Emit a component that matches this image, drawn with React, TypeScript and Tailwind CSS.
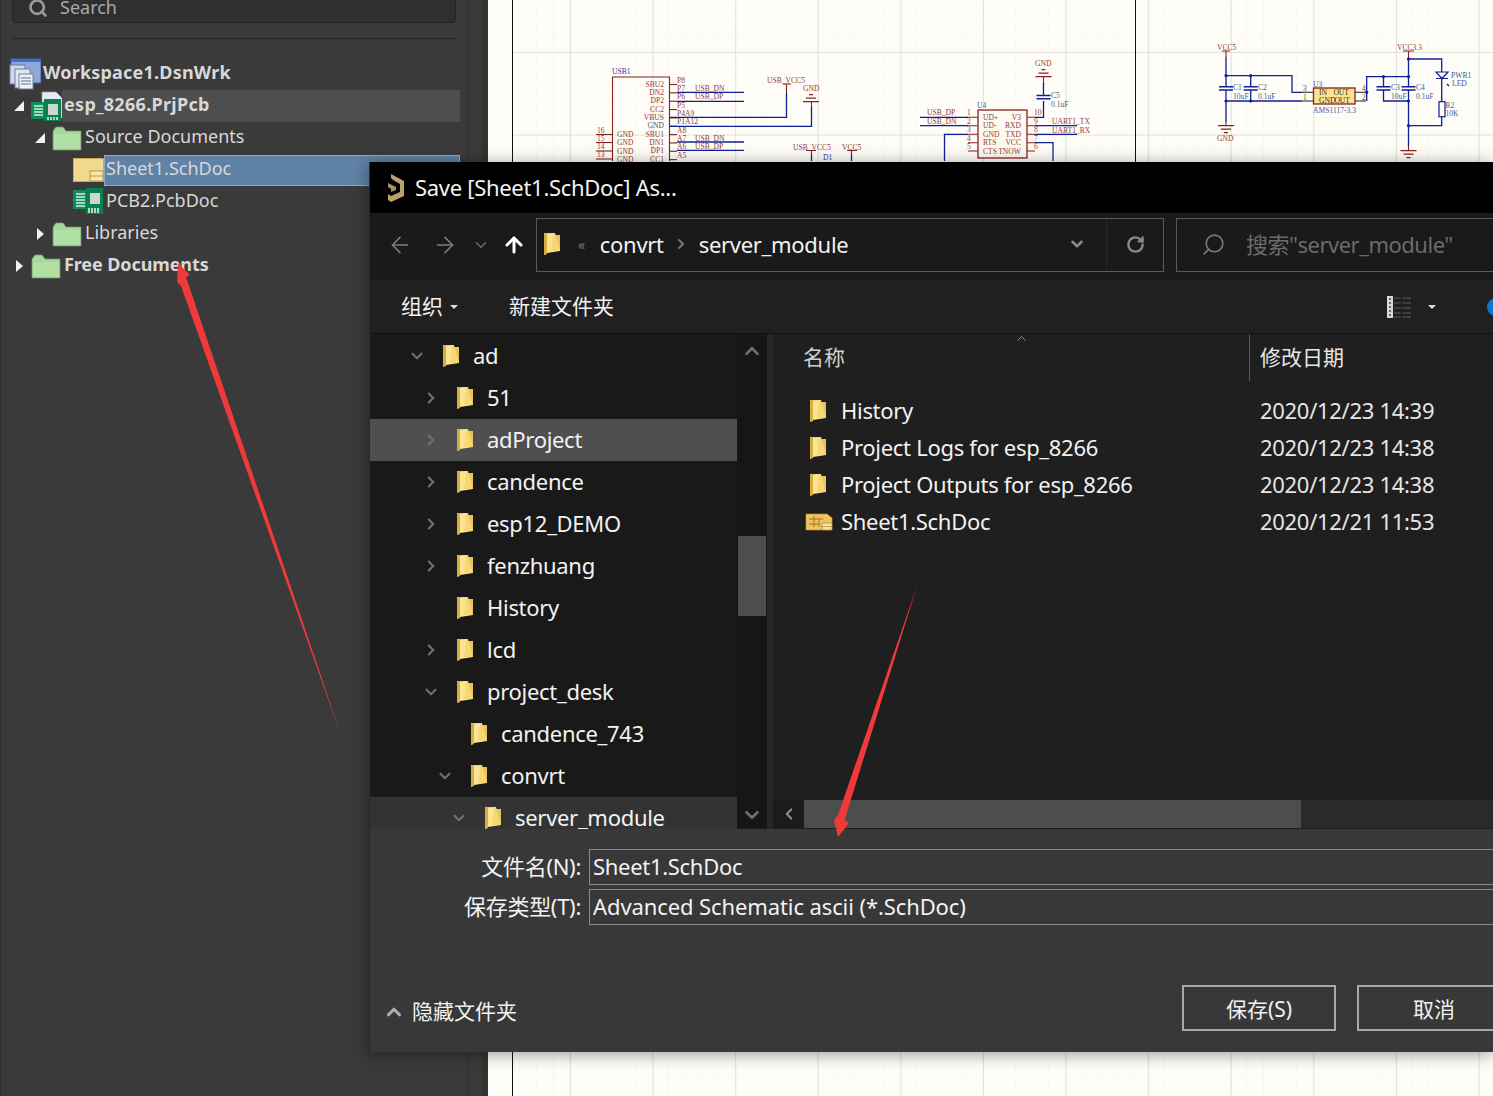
import { ArrowLeft, ArrowRight, ArrowUp, ChevronDown, ChevronLeft, ChevronRight, ChevronUp, RotateCw, Search } from "lucide-react";

const uiFont = "font-['Noto_Sans','Noto_Sans_CJK_SC',sans-serif]";

function FolderIcon() {
  return (
    <svg width="18" height="24" viewBox="0 0 18 24" className="shrink-0">
      <path d="M1 1 L11 1 L12 3 L17 3 L17 19 L4 19 L4 22 L1 23 Z" fill="#e8c35c" />
      <path d="M4 2 L11 1 L13 19 L17 19 L4 21 Z" fill="#fbe595" />
      <path d="M1 2 L4 1 L4 21 L1 23 Z" fill="#d9ad3f" />
      <path d="M10 1 L12 1 L17 19 L8 19 Z" fill="#f7d774" />
    </svg>
  );
}

function GreenFolder() {
  return (
    <svg width="30" height="25" viewBox="0 0 30 25" className="shrink-0">
      <path d="M1 24 L1 5 L4 1 L11 1 L14 5 L29 5 L29 24 Z" fill="#a9d89c" stroke="#6f9968" strokeWidth="0.7" />
      <path d="M2 8 L28 8 L28 23 L2 23 Z" fill="#b2dfa4" />
    </svg>
  );
}

function TreeArrow({ open }: { open?: boolean }) {
  return (
    <svg width="10" height="12" viewBox="0 0 10 12" className="shrink-0">
      {open ? <path d="M0 11 L10 11 L10 1 Z" fill="#f2f2f2" /> : <path d="M1 0 L8 6 L1 12 Z" fill="#f2f2f2" />}
    </svg>
  );
}

function WorkspaceIcon() {
  return (
    <svg width="32" height="32" viewBox="0 0 32 32" className="shrink-0">
      <rect x="2" y="1" width="30" height="24" fill="#8fa9d6" stroke="#3c63b0" />
      <rect x="2" y="1" width="30" height="3" fill="#3f6fd0" />
      <rect x="1" y="7" width="15" height="19" fill="#cfd9ec" stroke="#6f7f9f" />
      <rect x="6" y="11" width="15" height="19" fill="#dfe6f3" stroke="#6f7f9f" />
      <rect x="10" y="16" width="14" height="15" fill="#eef2f9" stroke="#6f7f9f" />
      <path d="M12 20h10M12 23h10M12 26h10" stroke="#5d6f92" />
    </svg>
  );
}

function PcbIcon({ withSheet }: { withSheet?: boolean }) {
  return (
    <svg width="32" height="30" viewBox="0 0 32 30" className="shrink-0">
      {withSheet && <path d="M12 1 L26 1 L32 7 L32 27 L12 27 Z" fill="#e4e9f2" stroke="#9aa6bb" strokeWidth="0.7" />}
      <rect x="1" y={withSheet ? 11 : 3} width="26" height={withSheet ? 17 : 19} fill="#0b8f5c" />
      <rect x="14" y={withSheet ? 8 : 1} width="17" height={withSheet ? 22 : 26} fill="#0a7f4f" />
      <rect x="18" y={withSheet ? 13 : 6} width="10" height="11" fill="#c9d7d0" />
      <path d={withSheet ? "M4 15h9M4 18h9M4 21h9M4 24h9" : "M4 7h9M4 10h9M4 13h9M4 16h9M4 19h9"} stroke="#d6efe2" strokeWidth="1.3" />
      <path d={withSheet ? "M18 26v3M21 26v3M24 26v3M27 26v3" : "M17 21v5M20 21v5M23 21v5M26 21v5"} stroke="#e9f5d8" strokeWidth="1.5" />
    </svg>
  );
}

function SchIcon() {
  return (
    <svg width="31" height="24" viewBox="0 0 31 24" className="shrink-0">
      <rect x="0.5" y="0.5" width="30" height="23" fill="#f0d98a" stroke="#c9ab55" />
      <rect x="17" y="13" width="13" height="10" fill="#f7e7ae" stroke="#b8974a" />
      <path d="M17 18h13" stroke="#b8974a" />
    </svg>
  );
}

function LeftPanel() {
  return (
    <div className={`${uiFont} relative h-full w-[488px] shrink-0 border-l border-[#2c2c2c] bg-[#3a3a3a] text-[18px] text-[#d8d8d8]`}>
      <div className="absolute bottom-0 left-[466px] top-0 w-px bg-[#2f2f2f]" />
      <div className="absolute bottom-0 left-[481px] top-0 w-[6px] bg-[#333333]" />
      <div className="ml-[11px] flex h-[23px] w-[444px] items-center gap-[12px] rounded-b border border-t-0 border-[#242424] bg-[#2f2f2f] pb-[7px] pl-[15px] text-[#a9a9a9]">
        <Search size={20} strokeWidth={3.2} className="text-[#9a9a9a]" />
        <span>Search</span>
      </div>
      <div className="ml-[11px] mt-[15px] h-px w-[445px] bg-[#252525]" />

      <div className="mt-[19px] w-[467px]">
        <div className="flex h-[32px] items-center pl-[8px]">
          <WorkspaceIcon />
          <span className="mb-[4px] ml-[2px] font-bold tracking-[0.2px]">Workspace1.DsnWrk</span>
        </div>
        <div className="flex h-[32px] items-center pl-[13px]">
          <TreeArrow open />
          <div className="ml-[6px]"><PcbIcon withSheet /></div>
          <div className="mr-[8px] flex h-full flex-1 items-center bg-[#4e4e4e] pb-[4px] pl-[2px] font-bold tracking-[0.3px]">esp_8266.PrjPcb</div>
        </div>
        <div className="flex h-[32px] items-center pl-[34px]">
          <TreeArrow open />
          <div className="ml-[7px]"><GreenFolder /></div>
          <span className="mb-[4px] ml-[3px]">Source Documents</span>
        </div>
        <div className="flex h-[32px] items-center pl-[72px]">
          <SchIcon />
          <div className="mr-[8px] flex h-[31px] flex-1 items-center border border-[#8fa9c4] bg-[#5f82a6] pb-[3px] pl-[1px]">Sheet1.SchDoc</div>
        </div>
        <div className="flex h-[32px] items-center pl-[71px]">
          <PcbIcon />
          <div className="ml-[2px] flex h-full flex-1 items-center border-b border-[#343434] pb-[2px]">PCB2.PcbDoc</div>
        </div>
        <div className="flex h-[32px] items-center pl-[35px]">
          <TreeArrow />
          <div className="ml-[6px]"><GreenFolder /></div>
          <div className="ml-[3px] flex h-full flex-1 items-center border-b border-[#343434] pb-[2px]">Libraries</div>
        </div>
        <div className="flex h-[32px] items-center pl-[14px]">
          <TreeArrow />
          <div className="ml-[6px]"><GreenFolder /></div>
          <div className="ml-[3px] flex h-full flex-1 items-center border-b border-[#343434] pb-[2px] font-bold tracking-[-0.1px]">Free Documents</div>
        </div>
      </div>
    </div>
  );
}

const RED = "#8a1f1f";
const BLUE = "#0f1f96";
const TEXT = "#9a3a3a";
const PART = "#4a5a92";

// cy is the vertical centre of the label, as read off the picture
function Label({ x, cy, t, end, color = TEXT }: { x: number; cy: number; t: string; end?: boolean; color?: string }) {
  return (
    <text x={x} y={cy + 2.5} fontSize="7.6" fill={color} textAnchor={end ? "end" : "start"} fontFamily="'Liberation Serif', serif">
      {t}
    </text>
  );
}

// power ground, dir 1 narrows downwards and -1 narrows upwards
function Gnd({ x, y, dir = 1 }: { x: number; y: number; dir?: number }) {
  return (
    <path d={`M${x - 8} ${y}h16M${x - 5} ${y + dir * 3.5}h10M${x - 2} ${y + dir * 7}h4`} stroke={RED} strokeWidth="1.2" fill="none" />
  );
}

function Cap({ x, y }: { x: number; y: number }) {
  return <path d={`M${x - 7} ${y}h14M${x - 7} ${y + 3.3}h14`} stroke={BLUE} strokeWidth="1.4" fill="none" />;
}

function Schematic() {
  const usbLeft = ["SBU2", "DN2", "DP2", "CC2", "VBUS", "GND", "SBU1", "DN1", "DP1", "CC1"];
  const usbPins = ["P8", "P7", "P6", "P5", "P4A9", "P1A12", "A8", "A7", "A6", "A5"];
  const u4Left = ["UD+", "UD-", "GND", "RTS", "CTS"];
  const u4Right = ["V3", "RXD", "TXD", "VCC", "TNOW"];
  const rowsY = [117.3, 125.7, 134.3, 142.7, 151];
  return (
    <svg viewBox="488 0 1005 1096" className="h-full w-full" preserveAspectRatio="none">
      <defs>
        <pattern id="fine" x="570" y="52" width="16.52" height="16.52" patternUnits="userSpaceOnUse">
          <path d="M16.52 0V16.52H0" fill="none" stroke="#f4f3ec" strokeWidth="1" />
        </pattern>
        <pattern id="coarse" x="570" y="52" width="82.6" height="82.6" patternUnits="userSpaceOnUse">
          <path d="M0 82.6V0H82.6" fill="none" stroke="#dcdbd5" strokeWidth="1.6" />
        </pattern>
      </defs>
      <rect x="488" y="0" width="1005" height="1096" fill="#fefdf8" />
      <rect x="513" y="0" width="980" height="1096" fill="url(#fine)" />
      <rect x="513" y="0" width="980" height="1096" fill="url(#coarse)" />
      <path d="M512.5 0V1096M1135.5 0V170" stroke="#111" strokeWidth="1" fill="none" />

      <Label x={612} cy={71} t="USB1" color="#2b3a9c" />
      <path d="M612.5 161V77H669.5V161" stroke={RED} strokeWidth="1.1" fill="none" />
      {usbLeft.map((t, i) => (
        <g key={t}>
          <Label x={664} cy={84 + i * 8.35} t={t} end color={t === "GND" ? "#555555" : TEXT} />
          <path d={`M670 ${84.5 + i * 8.35}h7`} stroke={RED} strokeWidth="1.1" />
          <Label x={677} cy={80 + i * 8.35} t={usbPins[i]} color={t === "GND" ? "#555555" : TEXT} />
        </g>
      ))}
      {[134.5, 142.5, 151, 159].map((y, i) => (
        <g key={y}>
          <path d={`M596 ${y}H612`} stroke={RED} strokeWidth="1.1" />
          <Label x={597} cy={y - 4.5} t={String(16 - i)} />
          <Label x={617} cy={y} t="GND" />
        </g>
      ))}
      <path d="M677 92.3H744M677 101.3H744M677 142H744M677 150.3H744M670 117.3H786.5V93M670 126.3H811.5V107" stroke={BLUE} fill="none" strokeWidth="1.3" />
      <Label x={695} cy={88} t="USB_DN" />
      <Label x={695} cy={96.7} t="USB_DP" />
      <Label x={695} cy={138} t="USB_DN" />
      <Label x={695} cy={146.7} t="USB_DP" />
      <Label x={767} cy={80} t="USB_VCC5" />
      <path d="M783 84h8M786.5 84V93" stroke={RED} strokeWidth="1.1" fill="none" />
      <Label x={803} cy={88.5} t="GND" />
      <Gnd x={811} y={101.7} dir={-1} />
      <path d="M811.5 101.7V107" stroke={RED} strokeWidth="1.1" />
      <Label x={793} cy={147} t="USB_VCC5" />
      <Label x={842} cy={147} t="VCC5" />
      <path d="M806 150.5h10M847 150.5h10M811.5 150.5V155M851.5 150.5V155" stroke={RED} strokeWidth="1.1" fill="none" />
      <path d="M811.5 155V161M851.5 155V161" stroke={BLUE} strokeWidth="1.3" />
      <Label x={823} cy={157} t="D1" color="#2b3a9c" />

      <rect x="978" y="110" width="49" height="48" fill="#fdfbf0" stroke={RED} strokeWidth="1.3" />
      <Label x={977} cy={105} t="U4" color={PART} />
      {rowsY.map((y, i) => (
        <g key={y}>
          <path d={`M968 ${y}H978M1027 ${y}H1035`} stroke={RED} strokeWidth="1.1" />
          <Label x={983} cy={y} t={u4Left[i]} />
          <Label x={1021} cy={y} t={u4Right[i]} end />
          <Label x={967} cy={y - 4.5} t={String(i + 1)} />
          <Label x={1034} cy={y - 4.5} t={String(10 - i)} />
        </g>
      ))}
      <path d="M920 117.3H968M920 125.7H968M944.5 161V134.3H968M1035 117.3H1043.5V101M1035 125.7H1077M1035 134.3H1077M1035 142.7H1053V161M1043.5 95.7V83" stroke={BLUE} fill="none" strokeWidth="1.3" />
      <path d="M1043.5 83V76.7" stroke={RED} strokeWidth="1.1" />
      <Label x={927} cy={112} t="USB_DP" />
      <Label x={927} cy={121.7} t="USB_DN" />
      <Label x={1052} cy={121.7} t="UART1_TX" />
      <Label x={1052} cy={130} t="UART1_RX" />
      <Label x={1035} cy={63.3} t="GND" />
      <Gnd x={1043.5} y={76.7} dir={-1} />
      <Cap x={1043.5} y={95.5} />
      <Label x={1051} cy={95.7} t="C5" color={PART} />
      <Label x={1051} cy={104.3} t="0.1uF" color={PART} />

      <Label x={1217} cy={47} t="VCC5" />
      <path d="M1222 51h8M1226 51V57" stroke={RED} strokeWidth="1.1" fill="none" />
      <path d="M1226 57V86.7M1226 90V122M1226 75.7H1292V92.3H1302M1226 101H1302M1250.7 75.7V86.7M1250.7 90V101" stroke={BLUE} fill="none" strokeWidth="1.3" />
      <Cap x={1226} y={86.7} />
      <Cap x={1250.7} y={86.7} />
      <Label x={1233} cy={87.7} t="C1" color={PART} />
      <Label x={1258} cy={87.7} t="C2" color={PART} />
      <Label x={1233} cy={96} t="10uF" color={PART} />
      <Label x={1258} cy={96} t="0.1uF" color={PART} />
      <path d="M1226 122V125.7" stroke={RED} strokeWidth="1.1" />
      <Gnd x={1226} y={125.7} />
      <Label x={1217} cy={138} t="GND" />

      <rect x="1313.5" y="88" width="41.5" height="16" fill="#fbe38f" stroke={RED} strokeWidth="1.3" />
      <Label x={1313} cy={84} t="U3" color={PART} />
      <Label x={1319} cy={92.7} t="IN" color="#333333" />
      <Label x={1349} cy={92.7} t="OUT" end color="#333333" />
      <Label x={1319} cy={100.7} t="GND" color="#333333" />
      <Label x={1350} cy={100.7} t="OUT" end color="#333333" />
      <Label x={1313} cy={110} t="AMS1117-3.3" color={PART} />
      <Label x={1303} cy={88} t="3" />
      <Label x={1303} cy={97} t="1" />
      <Label x={1362} cy={88} t="4" />
      <Label x={1362} cy={97} t="2" />
      <path d="M1302 92.3h11M1302 101h11M1355 92.3h11M1355 101h11" stroke="#222222" strokeWidth="1.1" />
      <path d="M1366.7 101V76.7H1408.5M1383.5 76.7V86.7M1383.5 90V101H1408.5M1408.5 57V86.7M1408.5 90V146M1408.5 59H1441.7V72M1441.7 78V101.7M1441.7 116.7V125.7H1408.5" stroke={BLUE} fill="none" strokeWidth="1.3" />
      <Cap x={1383.5} y={86.7} />
      <Cap x={1408.5} y={86.7} />
      <Label x={1391} cy={87.7} t="C3" color={PART} />
      <Label x={1416} cy={87.7} t="C4" color={PART} />
      <Label x={1391} cy={96} t="10uF" color={PART} />
      <Label x={1416} cy={96} t="0.1uF" color={PART} />
      <Label x={1397} cy={47} t="VCC3.3" />
      <path d="M1403 51h11M1408.5 51V57" stroke={RED} strokeWidth="1.1" fill="none" />
      <path d="M1408.5 146V150.7" stroke={RED} strokeWidth="1.1" />
      <Gnd x={1408.5} y={150.7} />
      <path d="M1436 72h12L1442 78.5ZM1436 78.5h12" stroke={BLUE} strokeWidth="1.2" fill="none" />
      <path d="M1447 84l2 2" stroke={BLUE} strokeWidth="1.5" />
      <Label x={1451} cy={75} t="PWR1" color={PART} />
      <Label x={1452} cy={83} t="LED" color={PART} />
      <rect x="1439" y="101.7" width="6" height="15" fill="none" stroke={BLUE} strokeWidth="1.2" />
      <Label x={1445.5} cy={105} t="R2" color={PART} />
      <Label x={1445.5} cy={113} t="10K" color={PART} />
      {[[1226, 75.7], [1250.7, 75.7], [1226, 101], [1250.7, 101], [1366.7, 92.3], [1383.5, 76.7], [1408.5, 76.7], [1408.5, 101], [1408.5, 59], [1408.5, 125.7]].map(([cx, cy]) => (
        <circle key={`${cx}-${cy}`} cx={cx} cy={cy} r="1.6" fill={BLUE} />
      ))}
    </svg>
  );
}

type NavItem = { name: string; depth: number; open?: boolean; leaf?: boolean; active?: boolean; selected?: boolean };

const navItems: NavItem[] = [
  { name: "ad", depth: 0, open: true },
  { name: "51", depth: 1 },
  { name: "adProject", depth: 1, active: true },
  { name: "candence", depth: 1 },
  { name: "esp12_DEMO", depth: 1 },
  { name: "fenzhuang", depth: 1 },
  { name: "History", depth: 1, leaf: true },
  { name: "lcd", depth: 1 },
  { name: "project_desk", depth: 1, open: true },
  { name: "candence_743", depth: 2, leaf: true },
  { name: "convrt", depth: 2, open: true },
  { name: "server_module", depth: 3, open: true, selected: true },
];

const files = [
  { name: "History", date: "2020/12/23 14:39" },
  { name: "Project Logs for esp_8266", date: "2020/12/23 14:38" },
  { name: "Project Outputs for esp_8266", date: "2020/12/23 14:38" },
  { name: "Sheet1.SchDoc", date: "2020/12/21 11:53", doc: true },
];

function NavRow({ item }: { item: NavItem }) {
  const bg = item.active ? "bg-[#4f4f4f]" : item.selected ? "bg-[#333333]" : "";
  const indent = ["pl-[38px]", "pl-[52px]", "pl-[66px]", "pl-[80px]"][item.depth];
  return (
    <div className={`flex h-[42px] shrink-0 items-center ${indent} ${bg}`}>
      <div className="flex w-[18px] justify-center text-[#6e6e6e]">
        {item.leaf ? null : item.open ? <ChevronDown size={20} strokeWidth={3} /> : <ChevronRight size={20} strokeWidth={3} />}
      </div>
      <div className="ml-[16px]"><FolderIcon /></div>
      <span className="mb-[2px] ml-[13px]">{item.name}</span>
    </div>
  );
}

function SchFileIcon() {
  return (
    <svg width="28" height="18" viewBox="0 0 28 18" className="shrink-0">
      <path d="M1 1H22L27 5V17H1Z" fill="#f2c25e" stroke="#c8963a" strokeWidth="0.6" />
      <path d="M4 6h14M9 3v11M4 11h10M14 6v8" stroke="#9c7526" strokeWidth="1" fill="none" />
      <path d="M17 10h10v7H17Z" fill="#f8e2a8" stroke="#9c7526" strokeWidth="0.6" />
      <path d="M17 13.5h10" stroke="#9c7526" strokeWidth="0.6" />
    </svg>
  );
}

function ViewIcon() {
  return (
    <svg width="24" height="24" viewBox="0 0 24 24" className="shrink-0">
      <rect x="0" y="1" width="6" height="22" fill="#d8d8d8" />
      <path d="M2 4h2M2 8h2M2 12h2M2 16h2M2 20h2" stroke="#6b6b6b" strokeWidth="2" />
      <path d="M7 3h17M7 8h17M7 13h17M7 18h17M7 22h17" stroke="#5c5c5c" strokeWidth="1" />
      <path d="M14.5 2v21" stroke="#202020" strokeWidth="1.5" />
    </svg>
  );
}

function SaveDialog() {
  return (
    <div className={`${uiFont} absolute bottom-[44px] left-[369px] top-[162px] flex w-[1124px] flex-col overflow-hidden border-l border-[#2a2a2a] bg-[#1f1f1f] text-[22px] tracking-[-0.3px] text-[#f2f2f2] shadow-[0_2px_16px_rgba(0,0,0,0.4)]`}>
      <div className="flex h-[51px] shrink-0 items-center bg-black pl-[16px]">
        <svg width="20" height="30" viewBox="0 0 20 30">
          <path d="M5 1 L18 8 L18 23 L5 29 L2 27 L2 21 L5 23 L14 19 L14 11 L7 7 L5 5 Z" fill="#b7a26c" />
          <path d="M2 10 L10 14 L10 17 L5 19 L5 16 L2 14 Z" fill="#a5925f" />
        </svg>
        <span className="ml-[9px]">Save [Sheet1.SchDoc] As...</span>
      </div>

      <div className="flex h-[67px] shrink-0 items-center bg-[#1a1a1a] pb-[3px]">
        <ArrowLeft size={26} strokeWidth={1.5} className="ml-[17px] shrink-0 text-[#7d7d7d]" />
        <ArrowRight size={26} strokeWidth={1.5} className="ml-[19px] shrink-0 text-[#7d7d7d]" />
        <ChevronDown size={18} strokeWidth={2} className="ml-[14px] shrink-0 text-[#6a6a6a]" />
        <ArrowUp size={24} strokeWidth={3} className="ml-[12px] shrink-0 text-white" />
        <div className="ml-[10px] flex h-[54px] w-[628px] shrink-0 items-center border border-[#5a5a5a] pb-[2px] pl-[5px]">
          <div className="ml-px"><FolderIcon /></div>
          <span className="ml-[17px] text-[14px] text-[#777777]">«</span>
          <span className="ml-[15px]">convrt</span>
          <ChevronRight size={16} strokeWidth={3} className="ml-[9px] text-[#777777]" />
          <span className="ml-[10px]">server_module</span>
          <ChevronDown size={18} strokeWidth={3.4} className="ml-auto text-[#8a8a8a]" />
          <div className="ml-[20px] flex h-full w-[57px] items-center justify-center border-l border-[#262626]">
            <RotateCw size={19} strokeWidth={3} className="text-[#8a8a8a]" />
          </div>
        </div>
        <div className="ml-[12px] flex h-[54px] flex-1 items-center border border-r-0 border-[#5a5a5a] pb-[2px] pl-[24px] text-[#6b6b6b]">
          <Search size={25} strokeWidth={1.5} className="-scale-x-100 text-[#7a7a7a]" />
          <span className="ml-[20px] whitespace-nowrap tracking-[-0.5px]">搜索"server_module"</span>
        </div>
      </div>

      <div className="flex h-[54px] shrink-0 items-center border-b border-[#111111] bg-[#202020] pl-[31px] text-[21px] tracking-normal">
        <span className="shrink-0 whitespace-nowrap">组织</span>
        <span className="ml-[7px] h-0 w-0 shrink-0 border-x-[4px] border-t-[4px] border-x-transparent border-t-[#dddddd]" />
        <span className="ml-[51px] shrink-0 whitespace-nowrap">新建文件夹</span>
        <div className="ml-[773px]"><ViewIcon /></div>
        <span className="ml-[17px] h-0 w-0 shrink-0 border-x-[4px] border-t-[4px] border-x-transparent border-t-[#dddddd]" />
        <span className="ml-[51px] h-[18px] w-[18px] shrink-0 rounded-full bg-[#0a78d4]" />
      </div>

      <div className="flex min-h-0 flex-1">
        <div className="flex w-[367px] shrink-0 flex-col overflow-hidden bg-[#191919] pt-px">
          {navItems.map((item) => (
            <NavRow key={item.name + item.depth} item={item} />
          ))}
        </div>
        <div className="flex w-[30px] shrink-0 flex-col items-center bg-[#161616] pb-[3px] pt-[6px] text-[#6e6e6e]">
          <ChevronUp size={22} strokeWidth={3} />
          <div className="mt-[174px] h-[80px] w-[28px] bg-[#4d4d4d]" />
          <ChevronDown size={22} strokeWidth={3} className="mt-auto" />
        </div>
        <div className="w-[6px] shrink-0 bg-[#262626]" />
        <div className="relative flex min-w-0 flex-1 flex-col bg-[#1f1f1f]">
          <div className="grid h-[47px] shrink-0 grid-cols-[476px_1fr] items-center text-[21px] tracking-normal">
            <div className="relative pl-[30px] text-[#d0d0d0]">
              名称
              <ChevronUp size={15} strokeWidth={1.5} className="absolute left-[241px] top-[-11px] text-[#9a9a9a]" />
            </div>
            <div className="h-full border-l border-[#5a5a5a] pl-[10px] leading-[47px] text-[#e6e6e6]">修改日期</div>
          </div>
          <div className="flex-1 pt-[11px]">
            {files.map((f) => (
              <div key={f.name} className="grid h-[37px] grid-cols-[476px_1fr] items-center">
                <div className={`flex items-center ${f.doc ? "pl-[32px]" : "pl-[36px]"}`}>
                  {f.doc ? <SchFileIcon /> : <FolderIcon />}
                  <span className={f.doc ? "ml-[8px]" : "ml-[14px]"}>{f.name}</span>
                </div>
                <div className="pl-[11px] text-[#e6e6e6]">{f.date}</div>
              </div>
            ))}
          </div>
          <div className="mb-[1px] flex h-[28px] shrink-0 bg-[#2a2a2a]">
            <div className="flex w-[31px] items-center justify-center bg-[#1b1b1b] text-[#8a8a8a]">
              <ChevronLeft size={18} strokeWidth={3} />
            </div>
            <div className="w-[497px] bg-[#4d4d4d]" />
          </div>
        </div>
      </div>

      <div className="flex h-[223px] shrink-0 flex-col bg-[#383838] pt-[20px]">
        <div className="flex h-[36px] items-center">
          <span className="mb-[1px] w-[211px] text-right">文件名(N):</span>
          <div className="ml-[8px] flex h-full flex-1 items-center border border-r-0 border-[#8a8a8a] pb-[2px] pl-[3px]">Sheet1.SchDoc</div>
        </div>
        <div className="mt-[4px] flex h-[36px] items-center">
          <span className="mb-[1px] w-[211px] text-right">保存类型(T):</span>
          <div className="ml-[8px] flex h-full flex-1 items-center border border-r-0 border-[#8a8a8a] pb-[2px] pl-[3px] tracking-[-0.1px]">Advanced Schematic ascii (*.SchDoc)</div>
        </div>
        <div className="mb-[21px] mt-auto flex items-center tracking-normal">
          <ChevronUp size={22} strokeWidth={3.4} className="ml-[13px] mt-[8px] shrink-0 text-[#b0b0b0]" />
          <span className="ml-[7px] mt-[8px] shrink-0 text-[21px]">隐藏文件夹</span>
          <div className="ml-auto flex h-[46px] w-[154px] shrink-0 items-center justify-center border-2 border-[#a8a8a8] pt-[3px] text-[21px]">保存(S)</div>
          <div className="-mr-[18px] ml-[21px] flex h-[46px] w-[154px] shrink-0 items-center justify-center border-2 border-[#a8a8a8] pt-[3px] text-[21px]">取消</div>
        </div>
      </div>
    </div>
  );
}

function RedArrows() {
  return (
    <svg viewBox="0 0 1493 1096" className="pointer-events-none absolute inset-0 h-full w-full">
      <polygon points="178,263 190,275 186,277 342,738 181,286 177,282" fill="#f03a3a" />
      <polygon points="838,837 849,823 844.6,820 917,586 838,815 834,820" fill="#f03a3a" />
    </svg>
  );
}

export default function App() {
  return (
    <div className="relative flex h-[1096px] w-[1493px] overflow-hidden bg-[#3a3a3a]">
      <LeftPanel />
      <div className="h-full min-w-0 flex-1">
        <Schematic />
      </div>
      <SaveDialog />
      <RedArrows />
    </div>
  );
}
